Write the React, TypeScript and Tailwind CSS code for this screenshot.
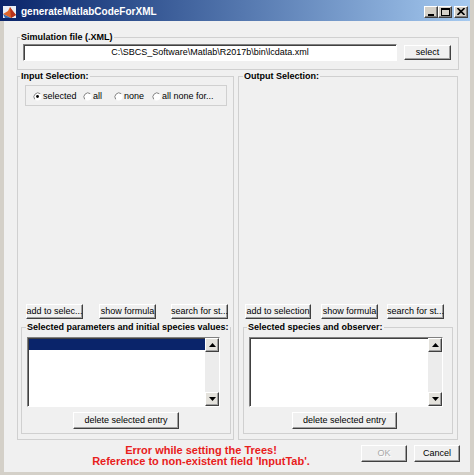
import React from "react";

const btn =
  "flex items-center justify-center bg-[#f0f0f0] border border-t-white border-l-white border-r-[#404040] border-b-[#404040] shadow-[inset_-1px_-1px_0_#a0a0a0] text-[9px] leading-none whitespace-nowrap";

const legendCls = "px-[1px] text-[9px] leading-[11px] font-bold whitespace-nowrap";

const MatlabIcon = () => (
  <svg width="13" height="12" viewBox="0 0 13 12">
    <rect x="0" y="0" width="13" height="12" fill="#e9eef6" />
    <polygon points="0,8 5,5 7,1 9,4 13,9 8,12 4,10" fill="#e0662a" />
    <polygon points="7,1 9,4 13,9 8,12" fill="#b8331b" />
    <polygon points="0,8 4,10 8,12 2,12" fill="#3467ad" />
  </svg>
);

const TitleBtn = ({ children, className = "" }: { children: React.ReactNode; className?: string }) => (
  <div
    className={`flex h-[12px] w-[14px] items-center justify-center bg-[#d4d0c8] border border-t-white border-l-white border-r-[#404040] border-b-[#404040] shadow-[inset_-1px_-1px_0_#808080] ${className}`}
  >
    {children}
  </div>
);

const TitleBar = () => (
  <div className="flex h-[21px] items-center bg-linear-to-r from-[#0a246a] to-[#a6caf0] pl-[3px] pr-[2px] pt-[2px]">
    <MatlabIcon />
    <span className="ml-[5px] text-[10px] font-bold leading-none text-white">generateMatlabCodeForXML</span>
    <div className="ml-auto flex">
      <TitleBtn>
        <svg width="6" height="8" viewBox="0 0 6 8">
          <rect x="0" y="6" width="6" height="2" fill="#000" />
        </svg>
      </TitleBtn>
      <TitleBtn>
        <svg width="9" height="8" viewBox="0 0 9 8">
          <rect x="0.5" y="0.5" width="8" height="7" fill="none" stroke="#000" />
          <rect x="0" y="0" width="9" height="2" fill="#000" />
        </svg>
      </TitleBtn>
      <TitleBtn className="ml-[2px]">
        <svg width="8" height="7" viewBox="0 0 8 7">
          <path d="M0.5 0 L7.5 7 M7.5 0 L0.5 7" stroke="#000" strokeWidth="1.6" />
        </svg>
      </TitleBtn>
    </div>
  </div>
);

const Radio = ({ label, checked, className = "" }: { label: string; checked?: boolean; className?: string }) => (
  <div className={`flex items-center ${className}`}>
    <svg width="9" height="9" viewBox="0 0 9 9">
      <circle cx="4.5" cy="4.5" r="4" fill="#fff" />
      <path d="M7.3 1.7 A4 4 0 0 0 1.7 7.3" fill="none" stroke="#808080" strokeWidth="1" />
      {checked && <circle cx="4.5" cy="4.5" r="1.4" fill="#000" />}
    </svg>
    <span className="ml-[1px] text-[9px] leading-none whitespace-nowrap">{label}</span>
  </div>
);

const ScrollArrow = ({ up }: { up?: boolean }) => (
  <div className="flex h-[14px] w-[14px] items-center justify-center bg-[#e4e2dc] border border-t-white border-l-white border-r-[#404040] border-b-[#404040] shadow-[inset_-1px_-1px_0_#a0a0a0]">
    <svg width="7" height="4" viewBox="0 0 7 4">
      <polygon points={up ? "0,4 7,4 3.5,0" : "0,0 7,0 3.5,4"} fill="#000" />
    </svg>
  </div>
);

const ListBox = ({ className, selected }: { className: string; selected?: boolean }) => (
  <div
    className={`flex h-[70px] bg-white border border-t-[#808080] border-l-[#808080] border-b-white border-r-white ${className}`}
  >
    <div className="flex-1 border-t border-l border-[#404040]">
      {selected && <div className="h-[11px] bg-[#0a246a]" />}
    </div>
    <div className="flex w-[14px] flex-col bg-[#ececec]">
      <ScrollArrow up />
      <div className="flex-1" />
      <ScrollArrow />
    </div>
  </div>
);

export default function App() {
  return (
    <div className="flex h-[475px] w-[474px] flex-col bg-[#d4d0c8] pr-[4px] pb-[3px] font-['Liberation_Sans',Arial,sans-serif] text-black select-none">
      <TitleBar />
      <div className="ml-[4px] flex flex-1 flex-col bg-[#f0f0f0] pl-[13px] pt-[11px]">
        {/* file chooser */}
        <fieldset className="h-[38px] w-[442px] border border-[#d0d0d0]">
          <legend className={`ml-[2px] ${legendCls}`}>Simulation file (.XML)</legend>
          <div className="mt-[1px] flex items-start">
            <div className="ml-[5px] flex h-[17px] w-[374px] items-center justify-center bg-white border border-t-[#808080] border-l-[#808080] border-b-white border-r-white shadow-[inset_1px_1px_0_#404040] text-[9px]">
              {"C:\\SBCS_Software\\Matlab\\R2017b\\bin\\lcdata.xml"}
            </div>
            <button className={`${btn} ml-[7px] mt-[1px] h-[15px] w-[47px]`}>select</button>
          </div>
        </fieldset>

        <div className="mt-[1px] flex gap-[4px]">
          {/* input side */}
          <fieldset className="h-[369px] w-[217px] border border-[#d0d0d0]">
            <legend className={`ml-[2px] ${legendCls}`}>Input Selection:</legend>
            <div className="ml-[7px] mt-[3px] flex h-[21px] w-[202px] items-center border border-[#d0d0d0] pl-[7px] pt-[2px]">
              <Radio label="selected" checked className="w-[50px]" />
              <Radio label="all" className="w-[31px]" />
              <Radio label="none" className="w-[38px]" />
              <Radio label="all none for..." />
            </div>
            <div className="ml-[8px] mt-[198px] flex">
              <button className={`${btn} h-[15px] w-[57px]`}>add to selec...</button>
              <button className={`${btn} ml-[16px] h-[15px] w-[57px]`}>show formula</button>
              <button className={`${btn} ml-[15px] h-[15px] w-[57px]`}>search for st...</button>
            </div>
            <fieldset className="ml-[3px] mt-[3px] h-[112px] w-[210px] border border-[#d0d0d0]">
              <legend className={`ml-[4px] ${legendCls}`}>Selected parameters and initial species values:</legend>
              <ListBox className="ml-[5px] mt-[4px] w-[193px]" selected />
              <button className={`${btn} ml-[51px] mt-[5px] h-[17px] w-[106px]`}>delete selected entry</button>
            </fieldset>
          </fieldset>

          {/* output side */}
          <fieldset className="h-[369px] w-[220px] border border-[#d0d0d0]">
            <legend className={`ml-[4px] ${legendCls}`}>Output Selection:</legend>
            <div className="ml-[6px] mt-[222px] flex">
              <button className={`${btn} h-[15px] w-[66px]`}>add to selection</button>
              <button className={`${btn} ml-[10px] h-[15px] w-[57px]`}>show formula</button>
              <button className={`${btn} ml-[9px] h-[15px] w-[57px]`}>search for st...</button>
            </div>
            <fieldset className="ml-[4px] mt-[3px] h-[112px] w-[210px] border border-[#d0d0d0]">
              <legend className={`ml-[3px] ${legendCls}`}>Selected species and observer:</legend>
              <ListBox className="ml-[5px] mt-[4px] w-[194px]" />
              <button className={`${btn} ml-[48px] mt-[5px] h-[17px] w-[105px]`}>delete selected entry</button>
            </fieldset>
          </fieldset>
        </div>

        <div className="mt-[5px] flex items-start">
          <div className="ml-[24px] w-[320px] text-center text-[11px] font-bold leading-[11px] text-[#e8201c]">
            Error while setting the Trees!
            <br />
            Reference to non-existent field 'InputTab'.
          </div>
          <button className={`${btn} h-[17px] w-[46px] text-[#a8a8a8] [text-shadow:1px_1px_0_#fff]`}>OK</button>
          <button className={`${btn} ml-[7px] h-[17px] w-[46px]`}>Cancel</button>
        </div>
      </div>
    </div>
  );
}
